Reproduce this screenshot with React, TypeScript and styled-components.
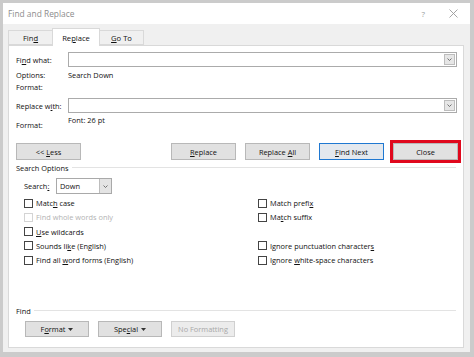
import React from "react";
import styled, { createGlobalStyle } from "styled-components";

const GlobalStyle = createGlobalStyle`
  html, body {
    margin: 0;
    padding: 0;
    background: #cbcbcb;
  }
  body {
    font-family: "Open Sans", "Noto Sans", sans-serif;
  }
`;

const Screen = styled.div`
  width: 474px;
  height: 357px;
  padding: 3px 4px 5px 3px;
  box-sizing: border-box;
`;

const Window = styled.div`
  width: 467px;
  height: 349px;
  background: #f0f0f0;
  display: flex;
  flex-direction: column;
  color: #111;
  font-size: 7.4px;
`;

const TitleBar = styled.div`
  height: 21px;
  background: #fff;
  display: flex;
  align-items: center;
  padding-left: 5px;
  padding-right: 12px;
`;

const Title = styled.div`
  flex: 1;
  color: #8c8c8c;
  font-size: 8.4px;
  padding-bottom: 1px;
`;

const TitleControls = styled.div`
  display: flex;
  align-items: center;
  gap: 24px;
  color: #9a9a9a;
  font-size: 8px;
`;

const TabStrip = styled.div`
  height: 21px;
  display: flex;
  align-items: flex-end;
  padding-left: 5px;
`;

const Tab = styled.div<{ $active?: boolean }>`
  width: ${(p) => (p.$active ? 48 : 45)}px;
  height: ${(p) => (p.$active ? 18 : 15)}px;
  margin-bottom: ${(p) => (p.$active ? -1 : 0)}px;
  box-sizing: border-box;
  display: flex;
  align-items: center;
  justify-content: center;
  background: ${(p) => (p.$active ? "#fff" : "#f0f0f0")};
  border: 1px solid #d9d9d9;
  border-bottom: ${(p) => (p.$active ? "none" : "1px solid #d9d9d9")};
  margin-left: ${(p) => (p.$active ? -1 : 0)}px;
  margin-right: ${(p) => (p.$active ? -1 : 0)}px;
  position: relative;
  z-index: ${(p) => (p.$active ? 1 : 0)};
  font-size: 7.6px;
  padding-top: ${(p) => (p.$active ? 0 : 1)}px;
`;

const Panel = styled.div`
  margin: 0 6px 4px 5px;
  flex: 1;
  background: #fff;
  border: 1px solid #d9d9d9;
  padding: 6px 6px 0 7px;
  display: flex;
  flex-direction: column;
`;

const FieldRow = styled.div<{ $top?: number }>`
  display: flex;
  align-items: center;
  height: 15px;
  margin-top: ${(p) => p.$top ?? 0}px;
`;

const Label = styled.div`
  width: 52px;
  flex: none;
  white-space: nowrap;
`;

const ComboInput = styled.div`
  flex: 1;
  height: 15px;
  box-sizing: border-box;
  border: 1px solid #ababab;
  background: #fff;
  display: flex;
  justify-content: flex-end;
  padding: 1px;
`;

const ArrowBox = styled.div`
  width: 11px;
  box-sizing: border-box;
  background: #e6e6e6;
  border: 1px solid #bdbdbd;
  display: flex;
  align-items: center;
  justify-content: center;
`;

const InfoRow = styled.div<{ $top?: number }>`
  display: flex;
  height: 12px;
  align-items: center;
  margin-top: ${(p) => p.$top ?? 0}px;
`;

const FormatRow = styled.div`
  display: flex;
  height: 18px;
`;

const BottomLabel = styled(Label)`
  align-self: flex-end;
  line-height: 12px;
`;

const TopValue = styled.div`
  margin-top: 1px;
  line-height: 12px;
`;

const ButtonRow = styled.div`
  display: flex;
  align-items: center;
  margin-top: 12px;
  height: 17px;
`;

const ButtonGroup = styled.div`
  margin-left: auto;
  margin-right: -1px;
  display: flex;
  gap: 9px;
`;

const Button = styled.div<{ $variant?: "default" | "primary" | "close" | "disabled" }>`
  width: 65px;
  height: 17px;
  box-sizing: border-box;
  display: flex;
  align-items: center;
  justify-content: center;
  gap: 3px;
  white-space: nowrap;
  border: 1px solid ${(p) => (p.$variant === "primary" ? "#1f78d1" : p.$variant === "disabled" ? "#d0d0d0" : "#b8b8b8")};
  color: ${(p) => (p.$variant === "disabled" ? "#a8a8a8" : "#111")};
  background: ${(p) => (p.$variant === "disabled" ? "#ececec" : p.$variant === "primary" ? "#e3e8ee" : "#e1e1e1")};
  box-shadow: ${(p) => (p.$variant === "close" ? "0 0 0 3px #e0081d" : "none")};
`;

const SmallButton = styled(Button)`
  width: 64px;
  height: 16px;
`;

const SectionHeader = styled.div<{ $top: number }>`
  display: flex;
  align-items: center;
  gap: 3px;
  height: 12px;
  margin-top: ${(p) => p.$top}px;
  margin-right: 1px;
  &::after {
    content: "";
    flex: 1;
    height: 1px;
    background: #e3e3e3;
    margin-top: -1px;
  }
`;

const SearchRow = styled.div`
  display: flex;
  align-items: center;
  margin-top: 4px;
  height: 16px;
  padding-left: 8px;
`;

const SearchLabel = styled.div`
  width: 32px;
`;

const Select = styled.div`
  width: 56px;
  height: 16px;
  box-sizing: border-box;
  border: 1px solid #a9a9a9;
  display: flex;
  align-items: center;
  padding-left: 3px;
`;

const SelectValue = styled.div`
  flex: 1;
`;

const SelectArrow = styled.div`
  width: 11px;
  height: 14px;
  background: #e4e4e4;
  border-left: 1px solid #bdbdbd;
  display: flex;
  align-items: center;
  justify-content: center;
`;

const OptionGrid = styled.div`
  display: grid;
  grid-template-columns: 234px 1fr;
  grid-template-rows: repeat(5, 14.25px);
  margin-top: 2px;
  padding-left: 8px;
`;

const CheckItem = styled.div<{ $disabled?: boolean; $row: number; $col: number }>`
  grid-row: ${(p) => p.$row};
  grid-column: ${(p) => p.$col};
  display: flex;
  align-items: center;
  gap: 3px;
  white-space: nowrap;
  color: ${(p) => (p.$disabled ? "#b3b3b3" : "#111")};
`;

const Box = styled.span<{ $disabled?: boolean }>`
  width: 9px;
  height: 9px;
  box-sizing: border-box;
  border: 1px solid ${(p) => (p.$disabled ? "#d4d4d4" : "#444")};
  background: #fff;
  flex: none;
`;

const BottomButtons = styled.div`
  display: flex;
  gap: 9px;
  margin-top: 4px;
  padding-left: 9px;
`;

const Chevron = () => (
  <svg width="5" height="3" viewBox="0 0 5 3">
    <path d="M0.5 0.5 L2.5 2.5 L4.5 0.5" fill="none" stroke="#555" strokeWidth="0.8" />
  </svg>
);

const Caret = () => (
  <svg width="5" height="3" viewBox="0 0 5 3">
    <path d="M0 0 H5 L2.5 3 Z" fill="#333" />
  </svg>
);

const CloseX = () => (
  <svg width="9" height="9" viewBox="0 0 9 9">
    <path d="M0.5 0.5 L8.5 8.5 M8.5 0.5 L0.5 8.5" stroke="#9a9a9a" strokeWidth="0.9" />
  </svg>
);

const leftOptions = [
  { pre: "Matc", key: "h", post: " case" },
  { pre: "Find whole words only", key: "", post: "", disabled: true },
  { pre: "", key: "U", post: "se wildcards" },
  { pre: "Sounds li", key: "k", post: "e (English)" },
  { pre: "Find all ", key: "w", post: "ord forms (English)" },
];

const rightOptions = [
  { row: 1, pre: "Match prefi", key: "x", post: "" },
  { row: 2, pre: "Ma", key: "t", post: "ch suffix" },
  { row: 4, pre: "Ignore punctuation character", key: "s", post: "" },
  { row: 5, pre: "Ignore ", key: "w", post: "hite-space characters" },
];

export default function App() {
  return (
    <Screen>
      <GlobalStyle />
      <Window>
        <TitleBar>
          <Title>Find and Replace</Title>
          <TitleControls>
            <span>?</span>
            <CloseX />
          </TitleControls>
        </TitleBar>
        <TabStrip>
          <Tab>
            <span>
              Fin<u>d</u>
            </span>
          </Tab>
          <Tab $active>
            <span>
              Re<u>p</u>lace
            </span>
          </Tab>
          <Tab>
            <span>
              <u>G</u>o To
            </span>
          </Tab>
        </TabStrip>
        <Panel>
          <FieldRow>
            <Label>
              Fi<u>n</u>d what:
            </Label>
            <ComboInput>
              <ArrowBox>
                <Chevron />
              </ArrowBox>
            </ComboInput>
          </FieldRow>
          <InfoRow $top={2}>
            <Label>Options:</Label>
            <div>Search Down</div>
          </InfoRow>
          <InfoRow>
            <Label>Format:</Label>
          </InfoRow>
          <FieldRow $top={5}>
            <Label>
              Replace w<u>i</u>th:
            </Label>
            <ComboInput>
              <ArrowBox>
                <Chevron />
              </ArrowBox>
            </ComboInput>
          </FieldRow>
          <FormatRow>
            <BottomLabel>Format:</BottomLabel>
            <TopValue>Font: 26 pt</TopValue>
          </FormatRow>
          <ButtonRow>
            <Button>
              <span>
                &lt;&lt; <u>L</u>ess
              </span>
            </Button>
            <ButtonGroup>
              <Button>
                <span>
                  <u>R</u>eplace
                </span>
              </Button>
              <Button>
                <span>
                  Replace <u>A</u>ll
                </span>
              </Button>
              <Button $variant="primary">
                <span>
                  <u>F</u>ind Next
                </span>
              </Button>
              <Button $variant="close">
                <span>Close</span>
              </Button>
            </ButtonGroup>
          </ButtonRow>
          <SectionHeader $top={2}>Search Options</SectionHeader>
          <SearchRow>
            <SearchLabel>
              Search<u>:</u>
            </SearchLabel>
            <Select>
              <SelectValue>Down</SelectValue>
              <SelectArrow>
                <Chevron />
              </SelectArrow>
            </Select>
          </SearchRow>
          <OptionGrid>
            {leftOptions.map((o, i) => (
              <CheckItem key={i} $row={i + 1} $col={1} $disabled={o.disabled}>
                <Box $disabled={o.disabled} />
                <span>
                  {o.pre}
                  {o.key && <u>{o.key}</u>}
                  {o.post}
                </span>
              </CheckItem>
            ))}
            {rightOptions.map((o) => (
              <CheckItem key={o.row} $row={o.row} $col={2}>
                <Box />
                <span>
                  {o.pre}
                  <u>{o.key}</u>
                  {o.post}
                </span>
              </CheckItem>
            ))}
          </OptionGrid>
          <SectionHeader $top={38}>Find</SectionHeader>
          <BottomButtons>
            <SmallButton>
              <span>
                F<u>o</u>rmat
              </span>
              <Caret />
            </SmallButton>
            <SmallButton>
              <span>
                Spe<u>c</u>ial
              </span>
              <Caret />
            </SmallButton>
            <SmallButton $variant="disabled">
              <span>No Formatting</span>
            </SmallButton>
          </BottomButtons>
        </Panel>
      </Window>
    </Screen>
  );
}
